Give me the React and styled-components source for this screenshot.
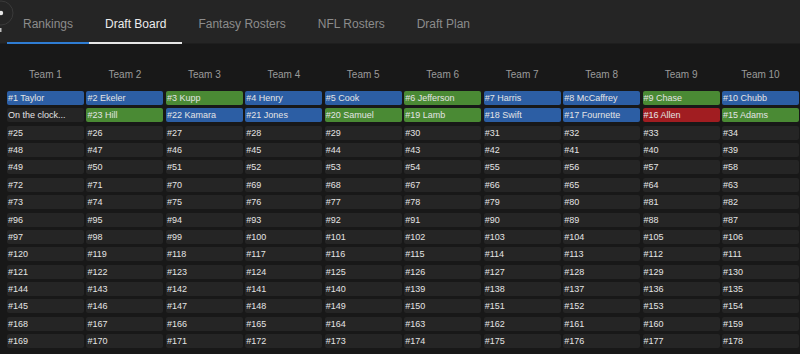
import React from "react";
import styled, { createGlobalStyle } from "styled-components";

const GlobalStyle = createGlobalStyle`
  html, body {
    margin: 0;
    padding: 0;
    background: #181818;
    font-family: "Liberation Sans", Arial, sans-serif;
  }
`;

const Page = styled.div`
  width: 800px;
  height: 354px;
  overflow: hidden;
  background: #181818;
`;

const NavBar = styled.div`
  position: relative;
  height: 43px;
  background: #252525;
  border-bottom: 1px solid #1e1e1e;
  display: flex;
  align-items: stretch;
  padding-left: 7px;
`;

const Tab = styled.div`
  position: relative;
  padding: 4px 16px 0;
  display: flex;
  align-items: center;
  font-size: 12px;
  color: ${(p) => (p.active ? "#ececec" : "#8c8c8c")};
  &::after {
    content: "";
    position: absolute;
    left: 0;
    right: 0;
    bottom: -1px;
    height: 2px;
    background: ${(p) => p.line || "transparent"};
  }
`;

const CornerButton = styled.svg`
  position: absolute;
  left: 0;
  top: 0;
`;

const Board = styled.div`
  padding: 20px 1px 0 7px;
`;

const HeaderRow = styled.div`
  display: grid;
  grid-template-columns: repeat(10, 1fr);
  column-gap: 2.5px;
  height: 20px;
  margin-bottom: 7px;
`;

const TeamName = styled.div`
  display: flex;
  align-items: center;
  justify-content: center;
  font-size: 10px;
  color: #9b9b9b;
`;

const Grid = styled.div`
  display: grid;
  grid-template-columns: repeat(10, 1fr);
  column-gap: 2.5px;
  row-gap: 3.36px;
`;

const COLORS = {
  RB: "#2c5ea4",
  WR: "#4a8a34",
  QB: "#a11d21",
};

const Cell = styled.div`
  height: 14px;
  box-sizing: border-box;
  border-radius: 2px;
  padding-left: 1px;
  display: flex;
  align-items: center;
  font-size: 9px;
  color: #e4e4e4;
  white-space: nowrap;
  overflow: hidden;
  background: ${(p) => (p.pos ? COLORS[p.pos] : "#252525")};
`;

const picks = {
  1: ["Taylor", "RB"],
  2: ["Ekeler", "RB"],
  3: ["Kupp", "WR"],
  4: ["Henry", "RB"],
  5: ["Cook", "RB"],
  6: ["Jefferson", "WR"],
  7: ["Harris", "RB"],
  8: ["McCaffrey", "RB"],
  9: ["Chase", "WR"],
  10: ["Chubb", "RB"],
  15: ["Adams", "WR"],
  16: ["Allen", "QB"],
  17: ["Fournette", "RB"],
  18: ["Swift", "RB"],
  19: ["Lamb", "WR"],
  20: ["Samuel", "WR"],
  21: ["Jones", "RB"],
  22: ["Kamara", "RB"],
  23: ["Hill", "WR"],
};

const TEAMS = 12;
const SHOWN = 10;
const ROUNDS = 15;
const CURRENT = 24;

const tabs = [
  { label: "Rankings", line: "#2f7dd3" },
  { label: "Draft Board", active: true, line: "#e6e6e6" },
  { label: "Fantasy Rosters" },
  { label: "NFL Rosters" },
  { label: "Draft Plan" },
];

const App = () => {
  const cells = [];
  for (let r = 0; r < ROUNDS; r++) {
    for (let c = 0; c < SHOWN; c++) {
      const pick = r % 2 === 0 ? r * TEAMS + c + 1 : r * TEAMS + (TEAMS - c);
      const p = picks[pick];
      let text = `#${pick}`;
      if (p) text = `#${pick} ${p[0]}`;
      if (pick === CURRENT) text = "On the clock...";
      cells.push(
        <Cell key={pick} pos={p ? p[1] : null}>
          {text}
        </Cell>
      );
    }
  }

  return (
    <Page>
      <GlobalStyle />
      <NavBar>
        <CornerButton width="16" height="34" viewBox="0 0 16 34">
          <circle cx="1" cy="13" r="12" fill="none" stroke="#3a3a3a" strokeWidth="1" />
          <circle cx="1" cy="13" r="2.2" fill="#e6e6e6" />
          <rect x="0" y="28" width="1.5" height="4" fill="#bdbdbd" />
        </CornerButton>
        {tabs.map((t) => (
          <Tab key={t.label} active={t.active} line={t.line}>
            {t.label}
          </Tab>
        ))}
      </NavBar>
      <Board>
        <HeaderRow>
          {Array.from({ length: SHOWN }, (_, i) => (
            <TeamName key={i}>Team {i + 1}</TeamName>
          ))}
        </HeaderRow>
        <Grid>{cells}</Grid>
      </Board>
    </Page>
  );
};

export default App;
